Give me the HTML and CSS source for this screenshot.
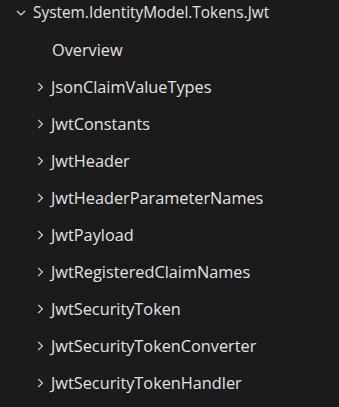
FILE: index.html
```html
<!DOCTYPE html>
<html lang="en">
<head>
	<meta charset="UTF-8">
	<title>System.IdentityModel.Tokens.Jwt</title>
	<link rel="stylesheet" href="styles.css">
</head>
<body>
	<ul class="tree">
		<li class="node open">
			<span class="twisty"><svg width="10" height="10" viewBox="0 0 10 10"><path d="M1 3 L5 7 L9 3" fill="none" stroke="currentColor" stroke-width="1.2"/></svg></span>
			<span class="label">System.IdentityModel.Tokens.Jwt</span>
		</li>
		<li class="item leaf"><span class="label">Overview</span></li>
		<li class="item"><span class="twisty"><svg width="10" height="10" viewBox="0 0 10 10"><path d="M3.2 0.8 L7.4 5 L3.2 9.2" fill="none" stroke="currentColor" stroke-width="1.2"/></svg></span><span class="label">JsonClaimValueTypes</span></li>
		<li class="item"><span class="twisty"><svg width="10" height="10" viewBox="0 0 10 10"><path d="M3.2 0.8 L7.4 5 L3.2 9.2" fill="none" stroke="currentColor" stroke-width="1.2"/></svg></span><span class="label">JwtConstants</span></li>
		<li class="item"><span class="twisty"><svg width="10" height="10" viewBox="0 0 10 10"><path d="M3.2 0.8 L7.4 5 L3.2 9.2" fill="none" stroke="currentColor" stroke-width="1.2"/></svg></span><span class="label">JwtHeader</span></li>
		<li class="item"><span class="twisty"><svg width="10" height="10" viewBox="0 0 10 10"><path d="M3.2 0.8 L7.4 5 L3.2 9.2" fill="none" stroke="currentColor" stroke-width="1.2"/></svg></span><span class="label">JwtHeaderParameterNames</span></li>
		<li class="item"><span class="twisty"><svg width="10" height="10" viewBox="0 0 10 10"><path d="M3.2 0.8 L7.4 5 L3.2 9.2" fill="none" stroke="currentColor" stroke-width="1.2"/></svg></span><span class="label">JwtPayload</span></li>
		<li class="item"><span class="twisty"><svg width="10" height="10" viewBox="0 0 10 10"><path d="M3.2 0.8 L7.4 5 L3.2 9.2" fill="none" stroke="currentColor" stroke-width="1.2"/></svg></span><span class="label">JwtRegisteredClaimNames</span></li>
		<li class="item"><span class="twisty"><svg width="10" height="10" viewBox="0 0 10 10"><path d="M3.2 0.8 L7.4 5 L3.2 9.2" fill="none" stroke="currentColor" stroke-width="1.2"/></svg></span><span class="label">JwtSecurityToken</span></li>
		<li class="item"><span class="twisty"><svg width="10" height="10" viewBox="0 0 10 10"><path d="M3.2 0.8 L7.4 5 L3.2 9.2" fill="none" stroke="currentColor" stroke-width="1.2"/></svg></span><span class="label">JwtSecurityTokenConverter</span></li>
		<li class="item"><span class="twisty"><svg width="10" height="10" viewBox="0 0 10 10"><path d="M3.2 0.8 L7.4 5 L3.2 9.2" fill="none" stroke="currentColor" stroke-width="1.2"/></svg></span><span class="label">JwtSecurityTokenHandler</span></li>
	</ul>
</body>
</html>
```

FILE: styles.css
```css
html,body{margin:0;padding:0;background:#1b1b1b;height:100%;overflow:hidden;}
body{font-family:"Open Sans","Noto Sans",sans-serif;font-size:16.3px;color:#e2e2e2;}
ul{list-style:none;padding:0;margin:0;}
.tree{margin-top:-6px;}
.tree li{display:flex;align-items:center;height:37px;white-space:nowrap;}
.tree .twisty{display:flex;align-items:center;justify-content:center;width:10px;height:10px;color:#d4d4d4;}
.tree .node{padding-left:16px;font-size:15.4px;}
.tree .node .twisty{margin-right:7px;}
.tree .item{padding-left:35px;}
.tree .item .twisty{margin-right:6px;}
.tree .leaf{padding-left:52px;}
```
